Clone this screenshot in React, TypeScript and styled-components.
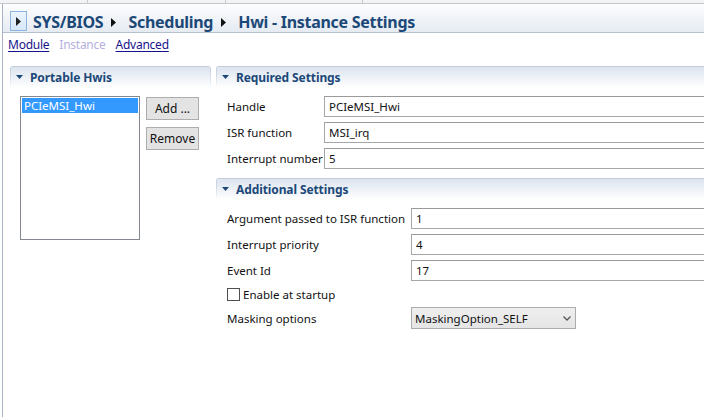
import React from "react";
import styled, { createGlobalStyle } from "styled-components";

const GlobalStyle = createGlobalStyle`
  html, body {
    margin: 0;
    padding: 0;
    background: #ffffff;
    overflow: hidden;
  }
  body {
    font-family: "Noto Sans", "Open Sans", sans-serif;
    font-size: 11.5px;
    color: #111111;
  }
  * { box-sizing: border-box; }
`;

const Window = styled.div`
  width: 704px;
  height: 417px;
  overflow: hidden;
  display: flex;
  flex-direction: column;
  background: #ffffff;
`;

const TabStrip = styled.div`
  height: 4px;
  flex: none;
  display: flex;
  background: #f2f3f5;
  border-bottom: 1px solid #c3cad3;
`;

const TabDivider = styled.span<{ $w: number }>`
  flex: none;
  width: ${(p) => p.$w}px;
  border-right: 1px solid #c9c9c9;
`;

const Editor = styled.div`
  flex: 1;
  margin-left: 2px;
  border-left: 1px solid #a8b4c4;
  display: flex;
  flex-direction: column;
  min-height: 0;
`;

const TitleBar = styled.div`
  flex: none;
  height: 29px;
  padding: 7px 0 0 7px;
  display: flex;
  align-items: flex-start;
  background: linear-gradient(#fdfdfe, #e5ebf2);
  border-bottom: 1px solid #b4c0ce;
`;

const ToggleButton = styled.div`
  width: 17px;
  height: 20px;
  border: 1px solid #8db5e2;
  background: linear-gradient(#edf5fd, #d6e7f8);
  display: flex;
  align-items: center;
  justify-content: center;
  margin-right: 6px;
`;

const Crumb = styled.span`
  font-size: 16px;
  font-weight: 700;
  line-height: 22px;
  letter-spacing: -0.28px;
  color: #1c4878;
  white-space: nowrap;
`;

const CrumbArrow = styled.svg`
  flex: none;
  margin: 7px 12px 0 8px;
`;

const NavLinks = styled.nav`
  flex: none;
  display: flex;
  gap: 10px;
  padding: 4px 0 0 5px;
  line-height: 16px;
  font-size: 12px;
  letter-spacing: -0.25px;
`;

const NavLink = styled.a<{ $disabled?: boolean }>`
  color: ${(p) => (p.$disabled ? "#b6b0e0" : "#16148a")};
  text-decoration: ${(p) => (p.$disabled ? "none" : "underline")};
  text-underline-offset: 2px;
  cursor: pointer;
`;

const Columns = styled.div`
  flex: 1;
  display: flex;
  gap: 5px;
  margin-top: 13px;
  padding-left: 7px;
  min-height: 0;
`;

const LeftCard = styled.section`
  flex: none;
  width: 201px;
`;

const RightColumn = styled.div`
  flex: 1;
  margin-right: -40px;
  display: flex;
  flex-direction: column;
`;

const SectionHeader = styled.header`
  height: 22px;
  display: flex;
  align-items: center;
  gap: 7px;
  padding-left: 6px;
  border-radius: 3px 3px 0 0;
  background:
    linear-gradient(#c3ccd8, #c3ccd8) top left / 100% 1px no-repeat,
    linear-gradient(#c3ccd8, rgba(255, 255, 255, 0)) top left / 1px 100% no-repeat,
    linear-gradient(#c3ccd8, rgba(255, 255, 255, 0)) top right / 1px 100% no-repeat,
    linear-gradient(#dae3ee, #ffffff);
`;

const SectionTitle = styled.span`
  font-size: 12px;
  font-weight: 700;
  letter-spacing: -0.1px;
  color: #1c4878;
  white-space: nowrap;
`;

const HwiBody = styled.div`
  display: flex;
  gap: 6px;
  padding: 8px 0 0 10px;
`;

const HwiList = styled.div`
  width: 120px;
  height: 144px;
  border: 1px solid #828790;
  padding: 1px;
  background: #ffffff;
`;

const HwiItem = styled.div<{ $selected?: boolean }>`
  height: 15px;
  line-height: 15px;
  padding-left: 2px;
  background: ${(p) => (p.$selected ? "#3399ff" : "transparent")};
  color: ${(p) => (p.$selected ? "#ffffff" : "#111111")};
  white-space: nowrap;
`;

const ButtonStack = styled.div`
  display: flex;
  flex-direction: column;
  gap: 7px;
  padding-top: 1px;
`;

const PushButton = styled.button`
  width: 53px;
  height: 23px;
  padding: 0;
  border: 1px solid #adadad;
  background: #e3e3e3;
  font: inherit;
  font-size: 12px;
  color: #111111;
`;

const SettingsGrid = styled.div<{ $labelWidth: number }>`
  display: grid;
  grid-template-columns: ${(p) => p.$labelWidth}px 1fr;
  row-gap: 5px;
  align-items: center;
  padding: 8px 0 9px 11px;
`;

const FieldLabel = styled.label`
  white-space: nowrap;
  color: #111111;
`;

const TextField = styled.input`
  height: 21px;
  width: 100%;
  border: 1px solid #a7a7a7;
  border-top-color: #9a9a9a;
  padding: 0 4px;
  font: inherit;
  color: #111111;
  background: #ffffff;
  outline: none;
`;

const CheckRow = styled.label`
  grid-column: 1 / -1;
  height: 16px;
  display: flex;
  align-items: center;
  gap: 3px;
  white-space: nowrap;
`;

const CheckBox = styled.span`
  width: 13px;
  height: 13px;
  border: 1px solid #4f4f4f;
  background: #ffffff;
`;

const ComboBox = styled.div`
  width: 165px;
  height: 22px;
  display: flex;
  align-items: center;
  justify-content: space-between;
  padding: 0 4px 0 3px;
  border: 1px solid #acacac;
  background: linear-gradient(#efefef, #e5e5e5);
  color: #111111;
`;

const DownTriangle = () => (
  <svg width="7" height="4" viewBox="0 0 7 4">
    <polygon points="0,0 7,0 3.5,4" fill="#1c4878" />
  </svg>
);

const RightTriangle = ({ color }: { color: string }) => (
  <svg width="5" height="9" viewBox="0 0 5 9">
    <polygon points="0,0 5,4.5 0,9" fill={color} />
  </svg>
);

type Field = { label: string; value: string };

const required: Field[] = [
  { label: "Handle", value: "PCIeMSI_Hwi" },
  { label: "ISR function", value: "MSI_irq" },
  { label: "Interrupt number", value: "5" },
];

const additional: Field[] = [
  { label: "Argument passed to ISR function", value: "1" },
  { label: "Interrupt priority", value: "4" },
  { label: "Event Id", value: "17" },
];

const FieldRows = ({ fields }: { fields: Field[] }) => (
  <>
    {fields.map((f) => (
      <React.Fragment key={f.label}>
        <FieldLabel>{f.label}</FieldLabel>
        <TextField defaultValue={f.value} />
      </React.Fragment>
    ))}
  </>
);

export default function App() {
  return (
    <Window>
      <GlobalStyle />
      <TabStrip>
        <TabDivider $w={88} />
        <TabDivider $w={138} />
        <TabDivider $w={137} />
      </TabStrip>
      <Editor>
        <TitleBar>
          <ToggleButton>
            <RightTriangle color="#222222" />
          </ToggleButton>
          <Crumb>SYS/BIOS</Crumb>
          <CrumbArrow width="5" height="9" viewBox="0 0 5 9">
            <polygon points="0,0 5,4.5 0,9" fill="#111111" />
          </CrumbArrow>
          <Crumb>Scheduling</Crumb>
          <CrumbArrow width="5" height="9" viewBox="0 0 5 9">
            <polygon points="0,0 5,4.5 0,9" fill="#111111" />
          </CrumbArrow>
          <Crumb>Hwi - Instance Settings</Crumb>
        </TitleBar>

        <NavLinks>
          <NavLink>Module</NavLink>
          <NavLink $disabled>Instance</NavLink>
          <NavLink>Advanced</NavLink>
        </NavLinks>

        <Columns>
          <LeftCard>
            <SectionHeader>
              <DownTriangle />
              <SectionTitle>Portable Hwis</SectionTitle>
            </SectionHeader>
            <HwiBody>
              <HwiList>
                <HwiItem $selected>PCIeMSI_Hwi</HwiItem>
              </HwiList>
              <ButtonStack>
                <PushButton>Add ...</PushButton>
                <PushButton>Remove</PushButton>
              </ButtonStack>
            </HwiBody>
          </LeftCard>

          <RightColumn>
            <section>
              <SectionHeader>
                <DownTriangle />
                <SectionTitle>Required Settings</SectionTitle>
              </SectionHeader>
              <SettingsGrid $labelWidth={97}>
                <FieldRows fields={required} />
              </SettingsGrid>
            </section>
            <section>
              <SectionHeader>
                <DownTriangle />
                <SectionTitle>Additional Settings</SectionTitle>
              </SectionHeader>
              <SettingsGrid $labelWidth={184}>
                <FieldRows fields={additional} />
                <CheckRow>
                  <CheckBox />
                  Enable at startup
                </CheckRow>
                <FieldLabel>Masking options</FieldLabel>
                <ComboBox>
                  <span>MaskingOption_SELF</span>
                  <svg width="8" height="5" viewBox="0 0 8 5">
                    <polyline
                      points="0.5,0.5 4,4 7.5,0.5"
                      fill="none"
                      stroke="#555555"
                      strokeWidth="1.3"
                    />
                  </svg>
                </ComboBox>
              </SettingsGrid>
            </section>
          </RightColumn>
        </Columns>
      </Editor>
    </Window>
  );
}
